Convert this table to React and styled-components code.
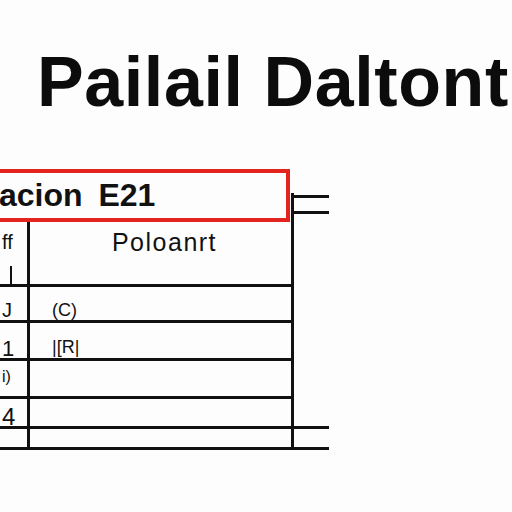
import React from 'react';
import styled, { createGlobalStyle } from 'styled-components';

const GlobalStyle = createGlobalStyle`
  html, body {
    margin: 0;
    padding: 0;
    background: #fdfdfd;
  }
  body {
    font-family: 'Liberation Sans', Arial, sans-serif;
    color: #111;
    overflow: hidden;
  }
`;

const Page = styled.div`
  width: 512px;
  height: 512px;
  overflow: hidden;
`;

const Title = styled.h1`
  margin: 0;
  padding: 47px 0 0 37px;
  font-size: 70px;
  line-height: 70px;
  font-weight: 700;
  letter-spacing: 0.6px;
  white-space: nowrap;
  color: #0c0c0c;
`;

const Board = styled.div`
  display: flex;
  margin: 52px 0 0 -10px;
`;

const Main = styled.div`
  width: 301px;
  display: flex;
  flex-direction: column;
`;

const Banner = styled.div`
  box-sizing: border-box;
  width: 300px;
  height: 53px;
  border: 4px solid #e3231d;
  padding-left: 5px;
  font-size: 32px;
  line-height: 45px;
  font-weight: 700;
  word-spacing: 7px;
  white-space: nowrap;
`;

const Table = styled.div`
  display: flex;
  flex-direction: column;
`;

const Row = styled.div`
  display: grid;
  grid-template-columns: 40px 1fr;
  height: ${(p) => p.$h}px;
  border-bottom: 3px solid #111;
`;

const Key = styled.div`
  box-sizing: border-box;
  border-right: 3px solid #111;
  padding: ${(p) => p.$top || 0}px 0 0 12px;
  font-size: ${(p) => p.$size || 20}px;
  line-height: 1;
  display: flex;
  flex-direction: column;
`;

const Stem = styled.div`
  width: 2px;
  height: 18px;
  margin: auto 0 0 8px;
  background: #111;
`;

const Cell = styled.div`
  padding: ${(p) => p.$top || 0}px 0 0 22px;
  font-size: ${(p) => p.$size || 18}px;
  line-height: 1;
  text-align: ${(p) => (p.$center ? 'center' : 'left')};
`;

const HeadText = styled.span`
  display: inline-block;
  font-size: 25px;
  letter-spacing: 1.5px;
  margin-left: -14px;
`;

const Rail = styled.div`
  width: 35px;
  margin-top: 24px;
  border-left: 3px solid #111;
  display: flex;
  flex-direction: column;
`;

const Tick = styled.div`
  height: 3px;
  background: #111;
  margin-top: ${(p) => p.$gap}px;
  ${(p) => p.$push && 'margin-top: auto;'}
`;

const rows = [
  { h: 33, key: 'J', keyTop: 13, keySize: 20, cell: '(C)', cellTop: 14 },
  { h: 35, key: '1', keyTop: 15, keySize: 22, cell: '|[R|', cellTop: 15 },
  { h: 35, key: 'i)', keyTop: 8, keySize: 16, cell: '', cellTop: 0 },
  { h: 27, key: '4', keyTop: 6, keySize: 24, cell: '', cellTop: 0 },
  { h: 18, key: '', keyTop: 0, keySize: 20, cell: '', cellTop: 0 },
];

export default function App() {
  return (
    <Page>
      <GlobalStyle />
      <Title>Pailail Daltont</Title>
      <Board>
        <Main>
          <Banner>acion E21</Banner>
          <Table>
            <Row $h={62}>
              <Key $top={10} $size={20}>
                ff
                <Stem />
              </Key>
              <Cell $center $top={8}>
                <HeadText>Poloanrt</HeadText>
              </Cell>
            </Row>
            {rows.map((r, i) => (
              <Row key={i} $h={r.h}>
                <Key $top={r.keyTop} $size={r.keySize}>
                  {r.key}
                </Key>
                <Cell $top={r.cellTop}>{r.cell}</Cell>
              </Row>
            ))}
          </Table>
        </Main>
        <Rail>
          <Tick $gap={2} />
          <Tick $gap={13} />
          <Tick $push />
          <Tick $gap={18} />
        </Rail>
      </Board>
    </Page>
  );
}
